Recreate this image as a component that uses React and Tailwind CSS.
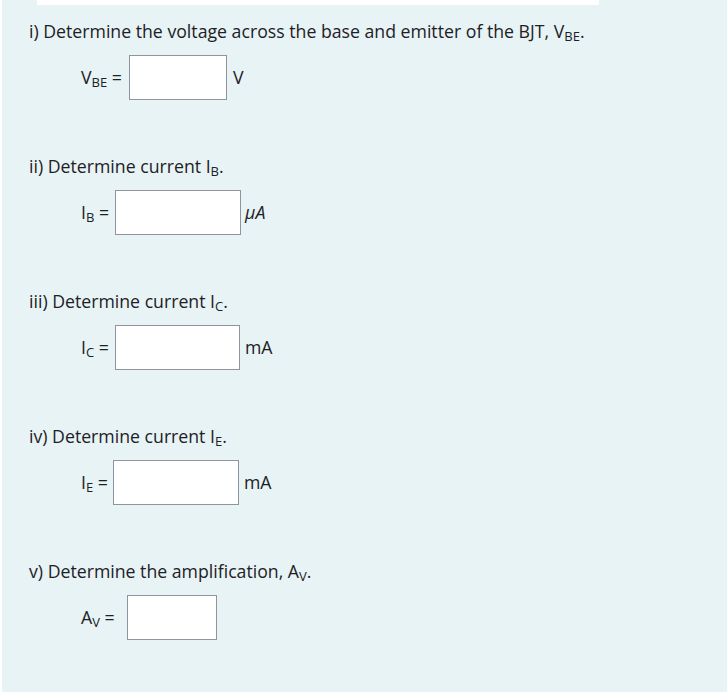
import React from "react";

function Sub({ children }) {
  return <sub className="text-[13px]">{children}</sub>;
}

function Block({ question, label, boxW, unit, unitGap, boxGap }) {
  return (
    <div className="flex flex-col">
      <div className="h-[24px] leading-[24px] text-[17.7px] text-[#1d2125] whitespace-nowrap">{question}</div>
      <div className="flex items-center mt-[12px] pl-[52px] h-[45px]">
        <div className="text-[17.7px] text-[#1d2125] whitespace-nowrap">{label}</div>
        <div className="h-[45px] border border-[#8f959e] bg-white" style={{ width: boxW, marginLeft: boxGap }} />
        {unit && <div className="text-[17.7px] text-[#1d2125]" style={{ marginLeft: unitGap }}>{unit}</div>}
      </div>
    </div>
  );
}

export default function App() {
  return (
    <div className="w-[727px] h-[692px] bg-white flex" style={{ fontFamily: '"Open Sans", sans-serif' }}>
      <div className="ml-[2px] flex-1 bg-[#e7f3f5] relative">
        <div className="absolute left-[35px] top-0 w-[562px] h-[5px] bg-white" />
        <div className="pt-[19px] pl-[27px] flex flex-col gap-[54px]">
          <Block
            question={<>i) Determine the voltage across the base and emitter of the BJT, V<Sub>BE</Sub>.</>}
            label={<>V<Sub>BE</Sub> =</>}
            boxW="98px"
            boxGap="7px"
            unit="V"
            unitGap="6px"
          />
          <Block
            question={<>ii) Determine current I<Sub>B</Sub>.</>}
            label={<>I<Sub>B</Sub> =</>}
            boxW="126px"
            boxGap="6px"
            unit={<i>μA</i>}
            unitGap="4px"
          />
          <Block
            question={<>iii) Determine current I<Sub>C</Sub>.</>}
            label={<>I<Sub>C</Sub> =</>}
            boxW="125px"
            boxGap="6px"
            unit="mA"
            unitGap="5px"
          />
          <Block
            question={<>iv) Determine current I<Sub>E</Sub>.</>}
            label={<>I<Sub>E</Sub> =</>}
            boxW="126px"
            boxGap="5px"
            unit="mA"
            unitGap="5px"
          />
          <Block
            question={<>v) Determine the amplification, A<Sub>V</Sub>.</>}
            label={<>A<Sub>V</Sub> =</>}
            boxW="90px"
            boxGap="12px"
          />
        </div>
      </div>
    </div>
  );
}
